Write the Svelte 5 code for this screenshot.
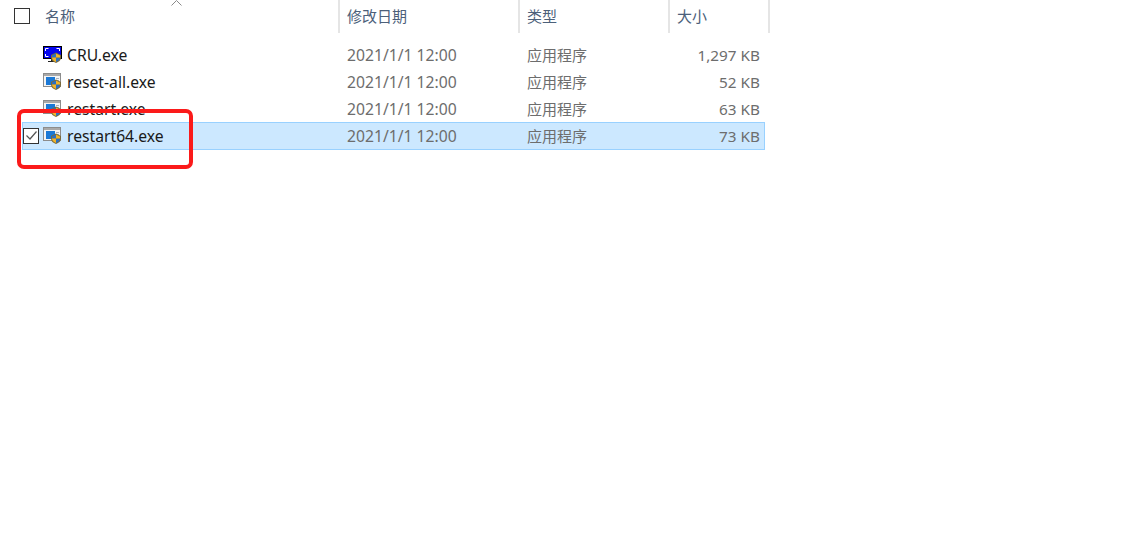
<script>
  const files = [
    { name: 'CRU.exe', date: '2021/1/1 12:00', type: '应用程序', size: '1,297 KB', icon: 'monitor' },
    { name: 'reset-all.exe', date: '2021/1/1 12:00', type: '应用程序', size: '52 KB', icon: 'app' },
    { name: 'restart.exe', date: '2021/1/1 12:00', type: '应用程序', size: '63 KB', icon: 'app' },
    { name: 'restart64.exe', date: '2021/1/1 12:00', type: '应用程序', size: '73 KB', icon: 'app', selected: true }
  ];
</script>

{#snippet shield()}
  <path d="M8 9l5 -2.500 5 2.500v2.500c0 2.800 -2.200 4.500 -5 5.500 -2.800 -1 -5 -2.700 -5 -5.500z" fill="#7a6a3a" />
  <path d="M9 9.500l4 -2v4h-4zM13 11.500h4c0 2.300 -1.800 3.700 -4 4.500z" fill="#2a6fc4" />
  <path d="M13 7.500l4 2v2h-4zM9 11.500h4v4.500c-2.200 -.8 -4 -2.200 -4 -4.500z" fill="#f0b429" />
{/snippet}

<div class="explorer">
  <div class="header">
    <div class="head-name">
      <span class="check-box"></span>
      <span class="head-label">名称</span>
      <svg class="sort" width="11" height="6" viewBox="0 0 11 6">
        <path d="M.5 5.500l5 -5 5 5" fill="none" stroke="#8a8a8a" />
      </svg>
    </div>
    <div class="head-cell"><span class="head-label">修改日期</span></div>
    <div class="head-cell"><span class="head-label">类型</span></div>
    <div class="head-cell"><span class="head-label">大小</span></div>
  </div>

  <div class="rows">
    {#each files as file}
      <div class="row" class:selected={file.selected}>
        <div class="name-cell">
          <span class="row-check">
            {#if file.selected}
              <span class="check-box">
                <svg width="13" height="11" viewBox="0 0 13 11">
                  <path d="M1.500 5.500l3.500 3.500 6.500 -7.500" fill="none" stroke="#555" stroke-width="1.200" />
                </svg>
              </span>
            {/if}
          </span>
          <svg class="icon" width="20" height="18" viewBox="0 0 20 18">
            {#if file.icon === 'monitor'}
              <rect x="0" y="0" width="19" height="13" fill="#000" />
              <rect x="1" y="1" width="17" height="11" fill="#0505f0" />
              <path d="M2.500 5v-2.500h3M13.500 2.500h3v2.500M2.500 8v2.500h3" fill="none" stroke="#fff" />
              <rect x="8" y="13" width="3" height="2" fill="#222" />
              <rect x="5" y="15" width="9" height="1" fill="#222" />
            {:else}
              <rect x=".5" y=".5" width="17" height="13" fill="#f4f4f4" stroke="#8c8c8c" />
              <rect x="1" y="1" width="16" height="2" fill="#a9a9a9" />
              <rect x="3" y="4" width="9" height="8" fill="#1a78d6" />
              <path d="M13 5.500h3M13 7.500h3M13 9.500h2" stroke="#a8b4c0" />
            {/if}
            {@render shield()}
          </svg>
          <span class="file-name">{file.name}</span>
        </div>
        <div class="cell date">{file.date}</div>
        <div class="cell">{file.type}</div>
        <div class="cell size">{file.size}</div>
      </div>
    {/each}
  </div>

  <div class="highlight"></div>
</div>

<style>
  :global(body) {
    background: #fff;
  }
  .explorer {
    position: relative;
    height: 549px;
    overflow: hidden;
    font-family: "Noto Sans", "Noto Sans CJK SC", sans-serif;
    font-size: 15px;
    color: #6d6d6d;
  }
  .header {
    display: grid;
    grid-template-columns: 340px 180px 150px 100px;
    height: 33px;
    width: 770px;
  }
  .head-name,
  .head-cell {
    position: relative;
    border-right: 2px solid #e5e5e5;
    display: flex;
    align-items: center;
    padding-bottom: 2px;
    box-sizing: border-box;
  }
  .head-name {
    padding-left: 14px;
  }
  .head-cell {
    padding-left: 7px;
  }
  .head-label {
    color: #4c607a;
    font-size: 15px;
  }
  .head-name .head-label {
    margin-left: 15px;
  }
  .sort {
    position: absolute;
    left: 171px;
    top: 0;
  }
  .check-box {
    display: inline-flex;
    align-items: center;
    justify-content: center;
    width: 14px;
    height: 14px;
    border: 1px solid #333;
    background: #fff;
  }
  .rows {
    margin-top: 8px;
    margin-left: 22px;
    width: 743px;
  }
  .row {
    display: grid;
    grid-template-columns: 317px 180px 150px 94px;
    height: 27px;
    box-sizing: border-box;
    align-items: center;
    border: 1px solid transparent;
  }
  .row.selected {
    height: 28px;
    padding-bottom: 1px;
    background: #cce8ff;
    border-color: #99d1ff;
  }
  .name-cell {
    display: flex;
    align-items: center;
  }
  .row-check {
    display: flex;
    width: 20px;
  }
  .icon {
    flex: none;
    margin-right: 4px;
  }
  .file-name {
    color: #1a1a1a;
    font-size: 15.7px;
  }
  .cell {
    padding-left: 7px;
  }
  .date {
    font-size: 15.7px;
  }
  .size {
    padding-right: 4px;
    text-align: right;
    font-size: 15.3px;
  }
  .highlight {
    position: absolute;
    left: 17px;
    top: 109px;
    width: 176px;
    height: 60px;
    box-sizing: border-box;
    border: 4px solid #fb1a1a;
    border-radius: 7px;
  }
</style>
